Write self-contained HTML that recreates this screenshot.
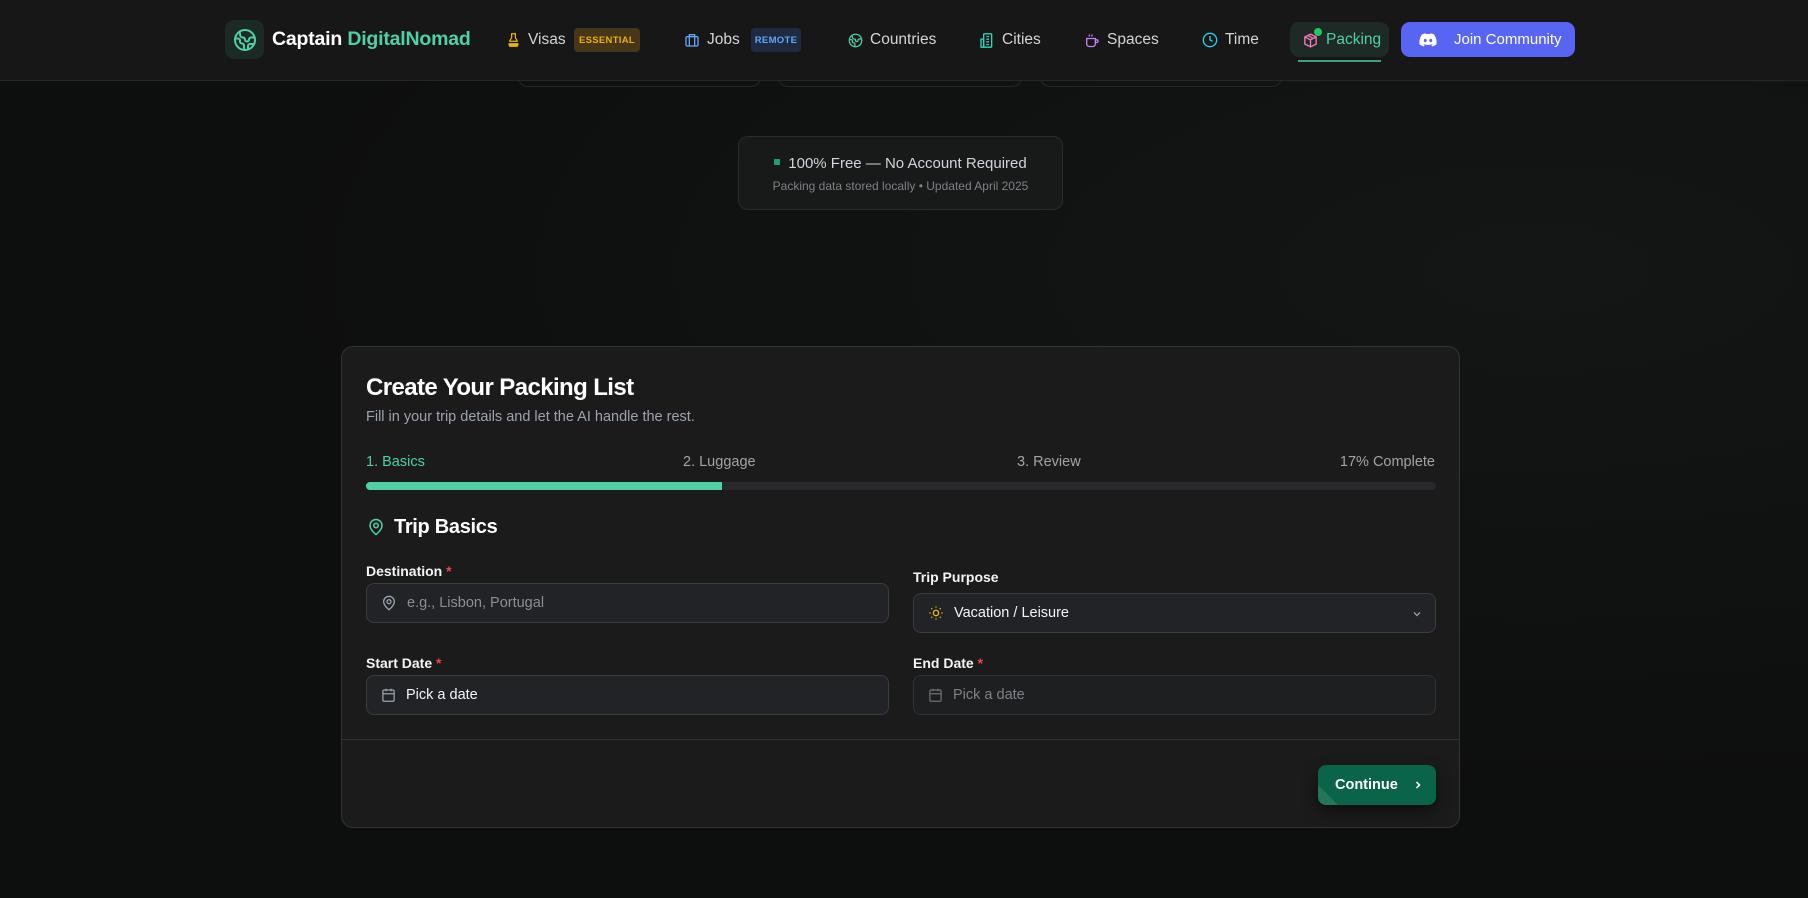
<!DOCTYPE html>
<html><head><meta charset="utf-8"><style>
*{box-sizing:border-box;margin:0;padding:0}
body{width:1808px;height:898px;overflow:hidden;background:radial-gradient(ellipse at 85% 30%,#141616 0%,#0d0e0e 60%);font-family:"Liberation Sans",sans-serif;color:#e5e7eb;position:relative}
.abs{position:absolute}
.nav{left:0;top:0;width:1808px;height:81px;background:#171717;border-bottom:1px solid #262626}
.ghost{top:70px;height:17px;border:1px solid #262626;border-top:none;border-radius:0 0 10px 10px}
.ni{position:absolute;top:29px;font-size:15.5px;color:#d4d4d4;display:flex;align-items:center;gap:7px;height:22px}
.badge{position:absolute;top:28px;height:24px;border-radius:4px;font-size:9.5px;font-weight:bold;letter-spacing:.3px;display:flex;align-items:center;justify-content:center}
svg{display:block}
.card{left:341px;top:346px;width:1119px;height:482px;background:#1b1b1b;border:1px solid #333;border-radius:12px}
.lbl{position:absolute;font-size:14px;font-weight:bold;color:#f3f4f6}
.lbl b{color:#ef4444}
.inp{position:absolute;height:40px;background:#212326;border:1px solid #3a3c40;border-radius:8px;display:flex;align-items:center;padding-left:14px;gap:10px;font-size:14.5px}
</style></head><body>
<div class="abs ghost" style="left:518px;width:243px"></div>
<div class="abs ghost" style="left:778px;width:244px"></div>
<div class="abs ghost" style="left:1040px;width:242px"></div>
<div class="abs nav">
 <div class="abs" style="left:225px;top:20px;width:39px;height:39px;border-radius:9px;background:#1c2a25;display:flex;align-items:center;justify-content:center">
  <svg width="24" height="24" viewBox="0 0 24 24" fill="none" stroke="#4fd1a5" stroke-width="2"><circle cx="12" cy="12" r="10"/><path d="M7 4.5v2a3 3 0 0 0 3 3 2 2 0 0 1 2 2 2 2 0 0 0 4 0 2 2 0 0 1 2-2h3M11 21.5v-4a2 2 0 0 0-2-2 2 2 0 0 1-2-2v-1a2 2 0 0 0-2-2H2.5M21 16h-4a2 2 0 0 0-2 2v3.5"/></svg>
 </div>
 <div class="abs" style="left:272px;top:28px;font-size:19.5px;font-weight:bold;color:#fff;letter-spacing:-.2px">Captain <span style="color:#4fd1a5">DigitalNomad</span></div>
 <div class="ni" style="left:506px"><svg width="15" height="16" viewBox="0 0 24 24" fill="none" stroke="#eab308" stroke-width="2"><path d="M9 2h6v6c0 2 3 3 3 6H6c0-3 3-4 3-6z"/><path d="M5 18h14v2H5zM5 22h14"/></svg>Visas</div>
 <div class="badge" style="left:574px;width:66px;background:#47361a;color:#eab308">ESSENTIAL</div>
 <div class="ni" style="left:684px"><svg width="16" height="16" viewBox="0 0 24 24" fill="none" stroke="#60a5fa" stroke-width="2"><rect x="3" y="7" width="18" height="14" rx="2"/><path d="M8 7V4h8v3M8 7v14M16 7v14"/></svg>Jobs</div>
 <div class="badge" style="left:751px;width:50px;background:#1e2a40;color:#60a5fa">REMOTE</div>
 <div class="ni" style="left:848px"><svg width="15" height="15" viewBox="0 0 24 24" fill="none" stroke="#4fd1a5" stroke-width="2"><circle cx="12" cy="12" r="10"/><path d="M7 4.5v2a3 3 0 0 0 3 3 2 2 0 0 1 2 2 2 2 0 0 0 4 0 2 2 0 0 1 2-2h3M11 21.5v-4a2 2 0 0 0-2-2 2 2 0 0 1-2-2v-1a2 2 0 0 0-2-2H2.5"/></svg>Countries</div>
 <div class="ni" style="left:979px"><svg width="16" height="17" viewBox="0 0 24 24" fill="none" stroke="#2dd4bf" stroke-width="2"><rect x="7" y="2" width="12" height="20" rx="1"/><path d="M3 10h4v12H3zM11 6h4M11 10h4M11 14h4M11 18h4"/></svg>Cities</div>
 <div class="ni" style="left:1084px"><svg width="16" height="17" viewBox="0 0 24 24" fill="none" stroke="#c084fc" stroke-width="2"><path d="M4 9h13v8a4 4 0 0 1-4 4H8a4 4 0 0 1-4-4zM17 11h2a2 2 0 0 1 0 4h-2M8 3v3M12 3v3"/></svg>Spaces</div>
 <div class="ni" style="left:1202px"><svg width="16" height="16" viewBox="0 0 24 24" fill="none" stroke="#22d3ee" stroke-width="2"><circle cx="12" cy="12" r="10"/><path d="M12 6v6l4 2"/></svg>Time</div>
 <div class="abs" style="left:1290px;top:22px;width:99px;height:35px;border-radius:9px;background:#1d2a25"></div>
 <div class="abs" style="left:1298px;top:60px;width:83px;height:2px;background:#3aa37c"></div>
 <div class="ni" style="left:1302px;color:#4fd1a5"><svg width="17" height="17" viewBox="0 0 24 24" fill="none" stroke="#f472b6" stroke-width="2"><path d="M12 3l8 4v10l-8 4-8-4V7z"/><path d="M4 7l8 4 8-4M12 11v10M8 5l8 4"/></svg>Packing</div>
 <div class="abs" style="left:1314px;top:28px;width:8px;height:8px;border-radius:50%;background:#22c55e"></div>
 <div class="abs" style="left:1401px;top:22px;width:174px;height:35px;border-radius:9px;background:#5865f2;display:flex;align-items:center;font-size:15px;color:#fff">
  <svg style="margin-left:18px;margin-right:17px" width="18" height="14" viewBox="0 0 24 18" fill="#fff"><path d="M20 1.5A19 19 0 0 0 15.3 0l-.6 1.2a18 18 0 0 0-5.4 0L8.7 0A19 19 0 0 0 4 1.5C1 6 .2 10.4.6 14.7A19 19 0 0 0 6.4 17.6l1.2-2a12 12 0 0 1-1.9-.9l.5-.4a13.5 13.5 0 0 0 11.6 0l.5.4a12 12 0 0 1-1.9.9l1.2 2a19 19 0 0 0 5.8-2.9c.5-5-.8-9.4-3.4-13.2zM8.3 12c-1.1 0-2-1-2-2.3s.9-2.3 2-2.3 2 1 2 2.3-.9 2.3-2 2.3zm7.4 0c-1.1 0-2-1-2-2.3s.9-2.3 2-2.3 2 1 2 2.3-.9 2.3-2 2.3z"/></svg>Join Community</div>
</div>
<div class="abs" style="left:738px;top:136px;width:325px;height:74px;border:1px solid #2a2b2c;border-radius:10px;background:#181919;text-align:center">
 <div style="margin-top:18px;font-size:15px;color:#d1d5db"><span style="display:inline-block;width:6px;height:6px;background:#1f9d6b;vertical-align:middle;margin-right:8px;position:relative;top:-2px"></span>100% Free — No Account Required</div>
 <div style="margin-top:7px;font-size:12px;color:#7d8288">Packing data stored locally • Updated April 2025</div>
</div>
<div class="abs card">
 <div class="abs" style="left:24px;top:27px;font-size:24px;font-weight:bold;color:#fff;letter-spacing:-.6px">Create Your Packing List</div>
 <div class="abs" style="left:24px;top:62px;font-size:14.5px;color:#9ca3af">Fill in your trip details and let the AI handle the rest.</div>
 <div class="abs" style="left:24px;top:107px;font-size:14.5px;color:#4fd1a5">1. Basics</div>
 <div class="abs" style="left:341px;top:107px;font-size:14.5px;color:#a3a3a3">2. Luggage</div>
 <div class="abs" style="left:675px;top:107px;font-size:14.5px;color:#a3a3a3">3. Review</div>
 <div class="abs" style="right:24px;top:107px;font-size:14.5px;color:#a3a3a3">17% Complete</div>
 <div class="abs" style="left:24px;top:135px;width:1070px;height:8px;border-radius:4px;background:#26282b;overflow:hidden"><div style="width:356px;height:8px;background:#4fd1a5"></div></div>
 <div class="abs" style="left:25px;top:170px"><svg width="18" height="20" viewBox="0 0 24 24" fill="none" stroke="#4fd1a5" stroke-width="2"><path d="M20 10c0 6-8 12-8 12s-8-6-8-12a8 8 0 0 1 16 0z"/><circle cx="12" cy="10" r="3"/></svg></div>
 <div class="abs" style="left:52px;top:169px;font-size:20px;font-weight:bold;color:#fff;letter-spacing:-.3px">Trip Basics</div>
 <div class="lbl" style="left:24px;top:216px">Destination <b>*</b></div>
 <div class="inp" style="left:24px;top:236px;width:523px;color:#8a8f96"><svg width="16" height="16" viewBox="0 0 24 24" fill="none" stroke="#9ca3af" stroke-width="2"><path d="M20 10c0 6-8 12-8 12s-8-6-8-12a8 8 0 0 1 16 0z"/><circle cx="12" cy="10" r="3"/></svg>e.g., Lisbon, Portugal</div>
 <div class="lbl" style="left:571px;top:222px">Trip Purpose</div>
 <div class="inp" style="left:571px;top:246px;width:523px;color:#f3f4f6"><svg width="16" height="16" viewBox="0 0 24 24" fill="none" stroke="#eab308" stroke-width="2"><circle cx="12" cy="12" r="4"/><path d="M12 2v2M12 20v2M4.9 4.9l1.4 1.4M17.7 17.7l1.4 1.4M2 12h2M20 12h2M4.9 19.1l1.4-1.4M17.7 6.3l1.4-1.4"/></svg>Vacation / Leisure
  <svg style="position:absolute;right:12px;top:14px" width="12" height="12" viewBox="0 0 24 24" fill="none" stroke="#9ca3af" stroke-width="2.5"><path d="M6 9l6 6 6-6"/></svg></div>
 <div class="lbl" style="left:24px;top:308px">Start Date <b>*</b></div>
 <div class="inp" style="left:24px;top:328px;width:523px;color:#f3f4f6"><svg width="15" height="16" viewBox="0 0 24 24" fill="none" stroke="#9ca3af" stroke-width="2"><rect x="3" y="4" width="18" height="18" rx="2"/><path d="M16 2v4M8 2v4M3 10h18"/></svg>Pick a date</div>
 <div class="lbl" style="left:571px;top:308px">End Date <b>*</b></div>
 <div class="inp" style="left:571px;top:328px;width:523px;color:#7d8288;background:#1e1f21;border-color:#303236"><svg width="15" height="16" viewBox="0 0 24 24" fill="none" stroke="#6b7075" stroke-width="2"><rect x="3" y="4" width="18" height="18" rx="2"/><path d="M16 2v4M8 2v4M3 10h18"/></svg>Pick a date</div>
 <div class="abs" style="left:0;top:392px;width:1117px;height:1px;background:#333"></div>
 <div class="abs" style="left:976px;top:418px;width:118px;height:40px;border-radius:8px;background:#0a6449;box-shadow:0 6px 14px rgba(0,0,0,.5);display:flex;align-items:center;font-size:14.5px;font-weight:bold;color:#fff;overflow:hidden">
  <div style="position:absolute;left:0;bottom:0;width:0;height:0;border-left:20px solid #2a7a5f;border-top:20px solid transparent;opacity:.8"></div>
  <span style="margin-left:17px">Continue</span>
  <svg style="margin-left:14px" width="12" height="12" viewBox="0 0 24 24" fill="none" stroke="#fff" stroke-width="3"><path d="M9 6l6 6-6 6"/></svg></div>
</div>
</body></html>
